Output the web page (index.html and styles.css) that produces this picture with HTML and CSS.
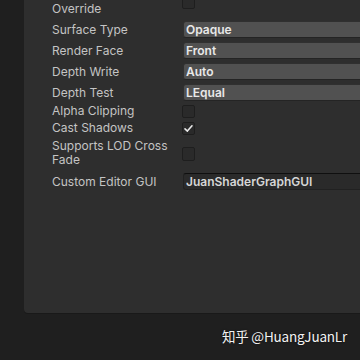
FILE: index.html
```html
<!DOCTYPE html>
<html>
<head>
<meta charset="utf-8">
<link rel="stylesheet" href="styles.css">
</head>
<body>
<div class="screen">
  <div class="panel">
    <div class="row row-override">
      <span class="label">Override</span>
      <span class="check check-top"></span>
    </div>
    <div class="row row-drop">
      <span class="label">Surface Type</span>
      <span class="drop">Opaque</span>
    </div>
    <div class="row row-drop">
      <span class="label">Render Face</span>
      <span class="drop">Front</span>
    </div>
    <div class="row row-drop">
      <span class="label">Depth Write</span>
      <span class="drop">Auto</span>
    </div>
    <div class="row row-drop">
      <span class="label">Depth Test</span>
      <span class="drop">LEqual</span>
    </div>
    <div class="row row-alpha">
      <span class="label">Alpha Clipping</span>
      <span class="check"></span>
    </div>
    <div class="row row-cast">
      <span class="label">Cast Shadows</span>
      <span class="check checked">
        <svg viewBox="0 0 13 13" width="13" height="13"><path d="M3 6.8 L5.4 9.1 L10 3.8" fill="none" stroke="#e8e8e8" stroke-width="1.6" stroke-linecap="round" stroke-linejoin="round"/></svg>
      </span>
    </div>
    <div class="row row-lod">
      <span class="label label-wrap">Supports LOD Cross Fade</span>
      <span class="check check-lod"></span>
    </div>
    <div class="row row-gui">
      <span class="label">Custom Editor GUI</span>
      <span class="textfield">JuanShaderGraphGUI</span>
    </div>
  </div>
  <div class="footer">
    <span class="watermark">知乎 @HuangJuanLr</span>
  </div>
</div>
</body>
</html>
```

FILE: styles.css
```css
html, body {
  margin: 0;
  padding: 0;
  background: #1f1f1f;
}

.screen {
  width: 360px;
  height: 360px;
  overflow: hidden;
  background: #1f1f1f;
  display: flex;
  flex-direction: column;
}

.panel {
  margin-left: 24px;
  width: 400px;
  height: 313px;
  flex: none;
  box-sizing: border-box;
  padding-left: 28px;
  background: #2e2e2e;
  border-bottom-left-radius: 4px;
  box-shadow: 0 1px 0 #191919;
  display: flex;
  flex-direction: column;
  font-family: "Inter", "Liberation Sans", sans-serif;
  font-size: 12px;
  color: #c4c4c4;
}

.row {
  display: grid;
  grid-template-columns: 130px 1fr;
  align-items: center;
}

.label {
  line-height: 14px;
}

.label-wrap {
  width: 120px;
}

.row-override {
  height: 18px;
}

.row-drop {
  height: 21px;
}

.row-override + .row-drop {
  margin-top: 1px;
}

.row-alpha {
  height: 16px;
}

.row-cast {
  height: 18px;
}

.row-lod {
  height: 32px;
}

.row-gui {
  height: 17px;
  margin-top: 4px;
}

.check {
  width: 13px;
  height: 13px;
  box-sizing: border-box;
  border: 1px solid #1e1e1e;
  border-radius: 2px;
  background: #2a2a2a;
  display: block;
}

.check svg {
  display: block;
  margin: -1px;
}

.check-top {
  align-self: start;
  margin-top: -4px;
}

.check-lod {
  margin-top: 2px;
  height: 14px;
}

.drop {
  display: block;
  height: 17px;
  box-sizing: border-box;
  margin-left: 1px;
  padding-left: 2px;
  background: #515151;
  border: 1px solid #303030;
  border-bottom-color: #242424;
  border-radius: 3px;
  color: #e8e8e8;
  font-weight: 600;
  line-height: 15px;
}

.textfield {
  display: block;
  height: 17px;
  box-sizing: border-box;
  margin-left: 1px;
  padding-left: 2px;
  background: #2a2a2a;
  border: 1px solid #212121;
  border-top-color: #0f0f0f;
  border-radius: 3px;
  color: #d6d6d6;
  font-weight: 600;
  line-height: 15px;
}

.footer {
  flex: 1;
  display: flex;
  justify-content: flex-end;
  align-items: center;
  padding-right: 13px;
  padding-bottom: 2px;
}

.watermark {
  font-family: "Noto Sans CJK SC", "Noto Sans", sans-serif;
  font-size: 13.5px;
  letter-spacing: -0.2px;
  color: #f2f2f2;
  text-shadow: 0 0 2px rgba(0, 0, 0, 0.6);
}
```
